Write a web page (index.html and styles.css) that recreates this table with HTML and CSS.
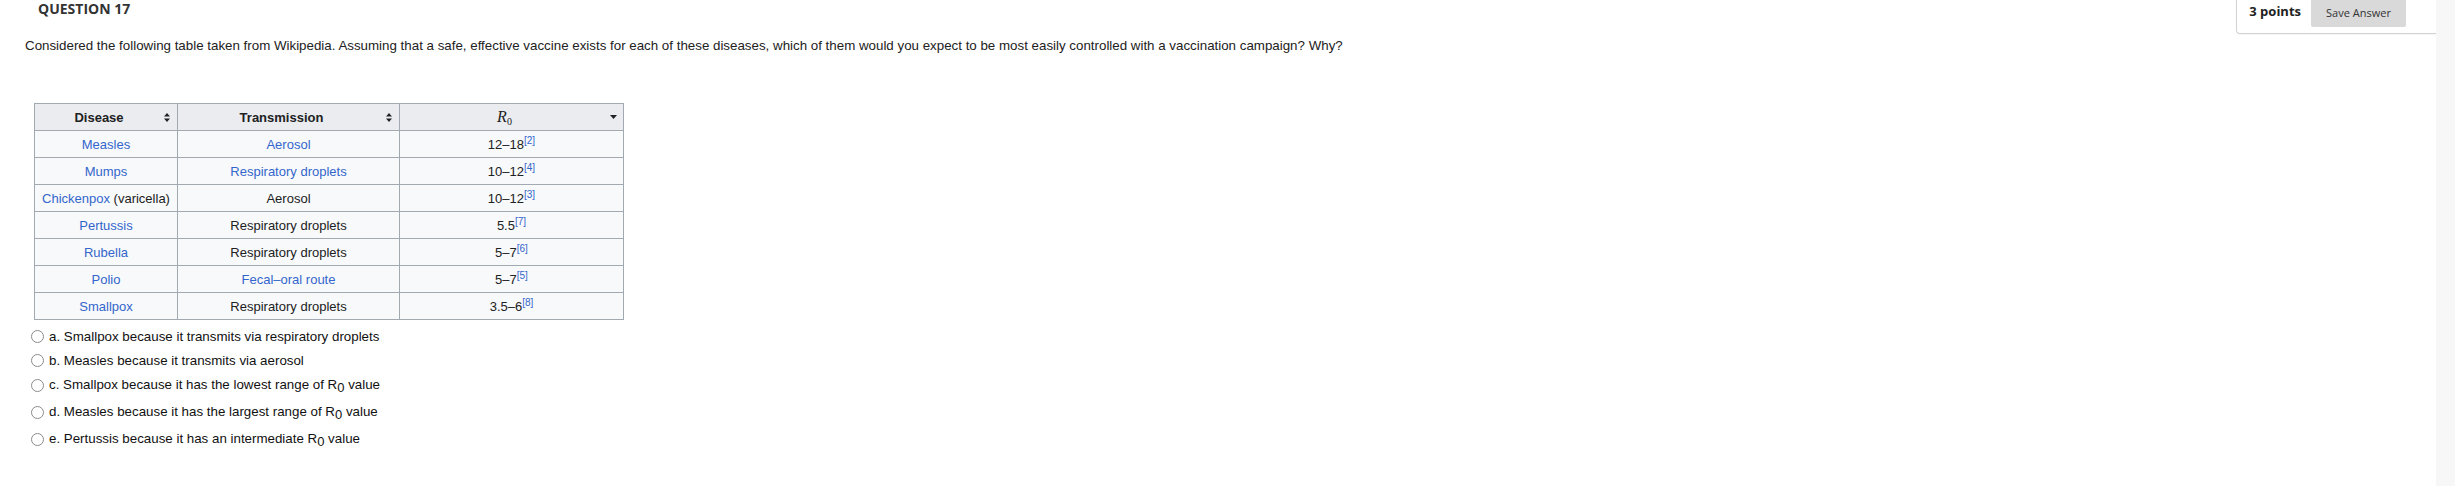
FILE: index.html
```html
<!DOCTYPE html>
<html lang="en">
<head>
<meta charset="utf-8">
<title>Question 17</title>
<link rel="stylesheet" href="styles.css">
</head>
<body>
<div class="page">
  <main class="main">
    <header class="qhead">
      <h2 class="qtitle">QUESTION 17</h2>
      <div class="points-box">
        <span class="points">3 points</span>
        <button class="save" type="button">Save Answer</button>
      </div>
    </header>
    <p class="qtext">Considered the following table taken from Wikipedia. Assuming that a safe, effective vaccine exists for each of these diseases, which of them would you expect to be most easily controlled with a vaccination campaign? Why?</p>
    <table class="wikitable">
      <colgroup><col class="c1"><col class="c2"><col class="c3"></colgroup>
      <thead>
        <tr>
          <th><span class="th-label">Disease</span><svg class="sort" width="6" height="9" viewBox="0 0 6 9"><path d="M0 3.6 L3 0 L6 3.6 Z M0 5.4 L3 9 L6 5.4 Z"/></svg></th>
          <th><span class="th-label">Transmission</span><svg class="sort" width="6" height="9" viewBox="0 0 6 9"><path d="M0 3.6 L3 0 L6 3.6 Z M0 5.4 L3 9 L6 5.4 Z"/></svg></th>
          <th class="th-r0"><span class="th-label"><span class="math">R<sub>0</sub></span></span><svg class="sort down" width="7" height="4" viewBox="0 0 7 4"><path d="M0 0 L7 0 L3.5 4 Z"/></svg></th>
        </tr>
      </thead>
      <tbody>
        <tr><td><a>Measles</a></td><td><a>Aerosol</a></td><td>12–18<sup><a>[2]</a></sup></td></tr>
        <tr><td><a>Mumps</a></td><td><a>Respiratory droplets</a></td><td>10–12<sup><a>[4]</a></sup></td></tr>
        <tr><td><a>Chickenpox</a> (varicella)</td><td>Aerosol</td><td>10–12<sup><a>[3]</a></sup></td></tr>
        <tr><td><a>Pertussis</a></td><td>Respiratory droplets</td><td>5.5<sup><a>[7]</a></sup></td></tr>
        <tr><td><a>Rubella</a></td><td>Respiratory droplets</td><td>5–7<sup><a>[6]</a></sup></td></tr>
        <tr><td><a>Polio</a></td><td><a>Fecal–oral route</a></td><td>5–7<sup><a>[5]</a></sup></td></tr>
        <tr><td><a>Smallpox</a></td><td>Respiratory droplets</td><td>3.5–6<sup><a>[8]</a></sup></td></tr>
      </tbody>
    </table>
    <ul class="options">
      <li class="opt"><span class="radio"></span><span class="opt-text">a. Smallpox because it transmits via respiratory droplets</span></li>
      <li class="opt"><span class="radio"></span><span class="opt-text">b. Measles because it transmits via aerosol</span></li>
      <li class="opt sub-opt"><span class="radio"></span><span class="opt-text">c. Smallpox because it has the lowest range of R<sub>0</sub> value</span></li>
      <li class="opt sub-opt"><span class="radio"></span><span class="opt-text">d. Measles because it has the largest range of R<sub>0</sub> value</span></li>
      <li class="opt sub-opt"><span class="radio"></span><span class="opt-text">e. Pertussis because it has an intermediate R<sub>0</sub> value</span></li>
    </ul>
  </main>
  <aside class="strip"></aside>
</div>
</body>
</html>
```
FILE: styles.css
```css
html, body {
  margin: 0;
  padding: 0;
  background: #ffffff;
}

.page {
  display: flex;
  min-height: 100vh;
}

.main {
  flex: 1;
  padding-left: 25px;
}

.strip {
  width: 19px;
  background: #f7f7f7;
}

.qhead {
  display: flex;
  align-items: flex-start;
  justify-content: space-between;
  height: 33px;
}

.qtitle {
  margin: 0 0 0 13px;
  font: 700 14px/17px "Open Sans", sans-serif;
  color: #333333;
}

.points-box {
  display: flex;
  align-items: flex-start;
  box-sizing: border-box;
  height: 34px;
  padding: 0 30px 0 12px;
  border-left: 1px solid #d2d2d2;
  border-bottom: 1px solid #d2d2d2;
  border-bottom-left-radius: 4px;
  box-shadow: 0 1px 1px rgba(0, 0, 0, 0.04);
}

.points {
  font: 700 13px/22px "Open Sans", sans-serif;
  color: #222222;
  margin-right: 10px;
}

.save {
  width: 95px;
  height: 27px;
  padding: 0 0 2px;
  border: none;
  border-radius: 0 0 2px 2px;
  background: #d9d9d9;
  color: #333333;
  font: 400 11px "Open Sans", sans-serif;
}

.qtext {
  margin: 5px 0 0;
  font: 13.33px/15px "Liberation Sans", Arial, sans-serif;
  color: #222222;
}

.wikitable {
  margin: 50px 0 0 9px;
  border-collapse: collapse;
  border: 1px solid #a2a9b1;
  background: #f8f9fa;
  color: #202122;
  font: 13px "Liberation Sans", Arial, sans-serif;
  table-layout: fixed;
  width: 589px;
}

.c1 { width: 143px; }
.c2 { width: 222px; }
.c3 { width: 224px; }

.wikitable tr {
  height: 27px;
}

.wikitable th,
.wikitable td {
  border: 1px solid #a2a9b1;
  padding: 0 6px;
  text-align: center;
  vertical-align: middle;
}

.wikitable th {
  background: #eaecf0;
  font-weight: 700;
  position: relative;
  padding: 0 20px 0 6px;
}

.wikitable a {
  color: #3366cc;
  text-decoration: none;
}

.wikitable sup {
  font-size: 10px;
  line-height: 1;
  vertical-align: 5px;
}

.sort {
  position: absolute;
  right: 7px;
  top: 50%;
  margin-top: -4.5px;
  fill: #202122;
}

.sort.down {
  right: 6px;
  margin-top: -2px;
}

.math {
  font: italic 400 16px "Liberation Serif", "Times New Roman", serif;
  color: #202122;
}

.math sub {
  font-style: normal;
  font-size: 10px;
  line-height: 1;
  vertical-align: -3px;
}

.options {
  list-style: none;
  margin: 4px 0 0 6px;
  padding: 0;
  font: 13.33px "Liberation Sans", Arial, sans-serif;
  color: #111111;
}

.opt {
  display: flex;
  align-items: center;
  height: 24px;
}

.opt.sub-opt {
  height: 26px;
  padding-bottom: 1px;
}

.radio {
  width: 13px;
  height: 13px;
  box-sizing: border-box;
  border: 1px solid #8c8c8c;
  border-radius: 50%;
  background: #ffffff;
  margin-right: 5px;
  flex: none;
}

.opt-text sub {
  font-size: 13px;
  line-height: 1;
  vertical-align: -3px;
}
```
